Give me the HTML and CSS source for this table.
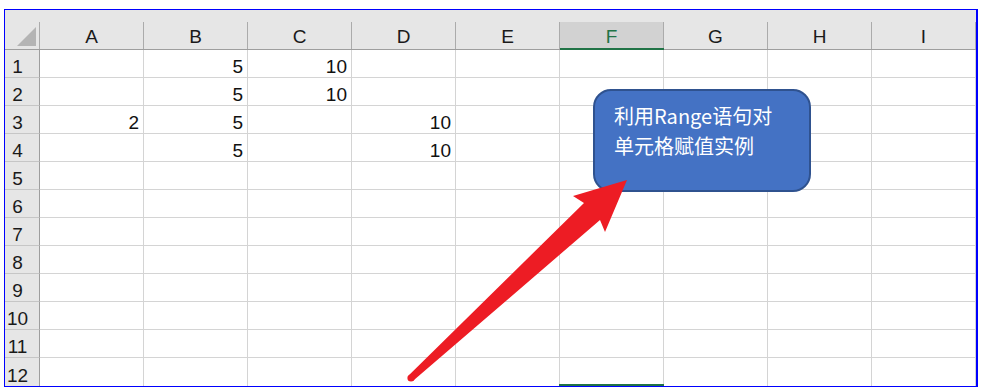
FILE: index.html
```html
<!DOCTYPE html>
<html>
<head>
<meta charset="utf-8">
<link rel="stylesheet" href="styles.css">
</head>
<body>
<div class="sheet">
  <div class="hdr">
    <div class="corner"><svg width="34" height="27" viewBox="0 0 34 27"><polygon points="31,5 31,24 12,24" fill="#b4b4b4"/></svg></div>
    <div class="ch">A</div><div class="ch">B</div><div class="ch">C</div><div class="ch">D</div><div class="ch">E</div><div class="ch sel">F</div><div class="ch">G</div><div class="ch">H</div><div class="ch">I</div>
  </div>
  <div class="row"><div class="rh">1</div><div class="c"></div><div class="c">5</div><div class="c">10</div><div class="c"></div><div class="c"></div><div class="c"></div><div class="c"></div><div class="c"></div><div class="c"></div></div>
  <div class="row"><div class="rh">2</div><div class="c"></div><div class="c">5</div><div class="c">10</div><div class="c"></div><div class="c"></div><div class="c"></div><div class="c"></div><div class="c"></div><div class="c"></div></div>
  <div class="row"><div class="rh">3</div><div class="c">2</div><div class="c">5</div><div class="c"></div><div class="c">10</div><div class="c"></div><div class="c"></div><div class="c"></div><div class="c"></div><div class="c"></div></div>
  <div class="row"><div class="rh">4</div><div class="c"></div><div class="c">5</div><div class="c"></div><div class="c">10</div><div class="c"></div><div class="c"></div><div class="c"></div><div class="c"></div><div class="c"></div></div>
  <div class="row"><div class="rh">5</div><div class="c"></div><div class="c"></div><div class="c"></div><div class="c"></div><div class="c"></div><div class="c"></div><div class="c"></div><div class="c"></div><div class="c"></div></div>
  <div class="row"><div class="rh">6</div><div class="c"></div><div class="c"></div><div class="c"></div><div class="c"></div><div class="c"></div><div class="c"></div><div class="c"></div><div class="c"></div><div class="c"></div></div>
  <div class="row"><div class="rh">7</div><div class="c"></div><div class="c"></div><div class="c"></div><div class="c"></div><div class="c"></div><div class="c"></div><div class="c"></div><div class="c"></div><div class="c"></div></div>
  <div class="row"><div class="rh">8</div><div class="c"></div><div class="c"></div><div class="c"></div><div class="c"></div><div class="c"></div><div class="c"></div><div class="c"></div><div class="c"></div><div class="c"></div></div>
  <div class="row"><div class="rh">9</div><div class="c"></div><div class="c"></div><div class="c"></div><div class="c"></div><div class="c"></div><div class="c"></div><div class="c"></div><div class="c"></div><div class="c"></div></div>
  <div class="row"><div class="rh">10</div><div class="c"></div><div class="c"></div><div class="c"></div><div class="c"></div><div class="c"></div><div class="c"></div><div class="c"></div><div class="c"></div><div class="c"></div></div>
  <div class="row"><div class="rh">11</div><div class="c"></div><div class="c"></div><div class="c"></div><div class="c"></div><div class="c"></div><div class="c"></div><div class="c"></div><div class="c"></div><div class="c"></div></div>
  <div class="row last"><div class="rh">12</div><div class="c"></div><div class="c"></div><div class="c"></div><div class="c"></div><div class="c"></div><div class="c selcol"></div><div class="c"></div><div class="c"></div><div class="c"></div></div>
</div>
<div class="callout">利用Range语句对<br>单元格赋值实例</div>
<svg class="arrow" width="988" height="392" viewBox="0 0 988 392">
  <polygon points="627,180 573,196 584,203 408.6,375.4 413.4,380.6 600,220 605,232" fill="#ed1c24"/>
  <circle cx="411" cy="378" r="3.6" fill="#ed1c24"/>
</svg>
</body>
</html>
```
FILE: styles.css
```css
html, body {
  margin: 0;
  padding: 0;
  background: #ffffff;
}
body {
  padding: 9px 0 0 4px;
  font-family: "Liberation Sans", Arial, sans-serif;
  color: #111;
}
.sheet {
  width: 971px;
  border: 1px solid #0000ff;
  border-right-width: 2px;
  background: #fff;
}
.hdr {
  display: grid;
  grid-template-columns: 35px repeat(9, 104px);
  background: #e6e6e6;
  padding-top: 12px;
  border-bottom: 1px solid #9e9e9e;
}
.corner, .ch {
  box-sizing: border-box;
  height: 27px;
  border-right: 1px solid #ababab;
}
.corner svg { display: block; }
.ch {
  display: flex;
  align-items: center;
  justify-content: center;
  font-size: 19px;
  color: #1a1a1a;
  padding-top: 2px;
  position: relative;
}
.ch.sel {
  background: #d2d2d2;
  color: #217346;
}
.ch.sel::after {
  content: "";
  position: absolute;
  left: 0;
  right: -1px;
  bottom: -1px;
  height: 2px;
  background: #217346;
}
.row {
  display: grid;
  grid-template-columns: 35px repeat(9, 104px);
  height: 28px;
}
.rh, .c {
  box-sizing: border-box;
  height: 28px;
  display: flex;
  align-items: flex-end;
  font-size: 19px;
  line-height: 1;
  padding-bottom: 1px;
}
.rh {
  background: #e6e6e6;
  border-right: 1px solid #9e9e9e;
  border-bottom: 1px solid #c6c6c6;
  justify-content: center;
  padding-right: 9px;
  color: #1a1a1a;
}
.c {
  border-right: 1px solid #d4d4d4;
  border-bottom: 1px solid #d4d4d4;
  justify-content: flex-end;
  padding-right: 4px;
}
.row.last .c, .row.last .rh { border-bottom: none; }
.c.selcol { position: relative; }
.c.selcol::after {
  content: "";
  position: absolute;
  left: -1px;
  right: -1px;
  bottom: 0;
  height: 2px;
  background: #217346;
}
.callout {
  position: absolute;
  left: 593px;
  top: 89px;
  width: 218px;
  height: 103px;
  box-sizing: border-box;
  background: #4472c4;
  border: 2px solid #2f528f;
  border-radius: 18px;
  color: #ffffff;
  font-family: "Noto Sans CJK SC", "Noto Sans", sans-serif;
  font-size: 20px;
  line-height: 30px;
  padding: 10px 0 0 19px;
}
.arrow {
  position: absolute;
  left: 0;
  top: 0;
  pointer-events: none;
}
```
